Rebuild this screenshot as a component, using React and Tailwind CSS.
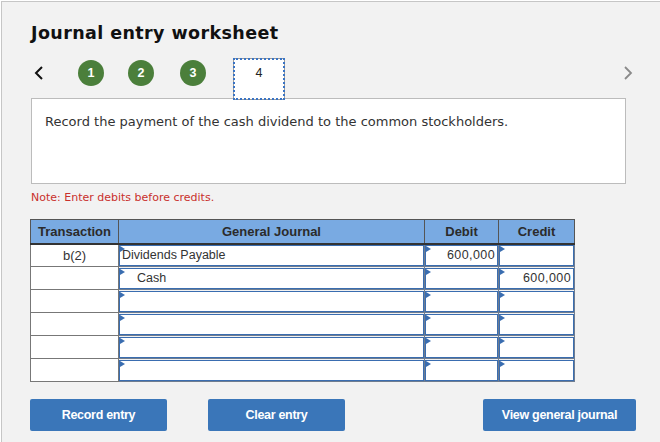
import { useState } from "react";

const rows = [
  { tx: "b(2)", account: "Dividends Payable", indent: false, debit: "600,000", credit: "" },
  { tx: "", account: "Cash", indent: true, debit: "", credit: "600,000" },
  { tx: "", account: "", indent: false, debit: "", credit: "" },
  { tx: "", account: "", indent: false, debit: "", credit: "" },
  { tx: "", account: "", indent: false, debit: "", credit: "" },
  { tx: "", account: "", indent: false, debit: "", credit: "" },
];

const InputCell = ({ value, align = "left", indent = false }) => (
  <td className="p-0 border border-[#6f7d90] h-[23px]">
    <div className="relative h-[21px] border border-[#3a6db0] bg-white flex items-center">
      <span className="absolute top-0 left-0 w-0 h-0 border-y-[3px] border-y-transparent border-l-[5px] border-l-[#3a6db0]" />
      <span
        className={`w-full text-[12.5px] text-[#333] leading-none ${
          align === "right" ? "text-right pr-[2px] tracking-[0.4px]" : indent ? "pl-[17px]" : "pl-[2px]"
        }`}
      >
        {value}
      </span>
    </div>
  </td>
);

const Step = ({ n }) => (
  <div className="mt-[2px] w-[26px] h-[26px] rounded-full bg-[#4b7f3b] flex items-center justify-center text-white text-[12.5px] font-bold font-['Liberation_Sans',sans-serif]">
    {n}
  </div>
);

export default function App() {
  const [step] = useState(4);

  return (
    <div className="w-[660px] h-[442px] bg-white pl-px pt-px overflow-hidden">
      <div className="h-full border-l border-t border-[#c6c6c6] bg-[#f2f2f2] pl-[28px] pr-[33px] font-['DejaVu_Sans',Verdana,sans-serif]">
        <h1 className="pt-[21px] pl-[1px] text-[17.5px] leading-[20px] font-bold text-[#111] tracking-[0.4px]">
          Journal entry worksheet
        </h1>

        <div className="mt-[15px] h-[41px] flex items-start">
          <svg width="11" height="14" viewBox="0 0 11 14" className="mt-[8px] ml-[3px]">
            <polyline points="9,1 3,7 9,13" fill="none" stroke="#111" strokeWidth="2" />
          </svg>
          <div className="flex gap-[24px] ml-[34px]">
            <Step n={1} />
            <Step n={2} />
            <div className="ml-[2px]">
              <Step n={3} />
            </div>
          </div>
          <div className="relative z-10 ml-[27px] w-[52px] h-[42px] bg-white border border-[#9a9a9a] outline-2 outline-dotted outline-[#3a74c4] outline-offset-[-2px] pt-[7px] text-center text-[12.5px] leading-[14px] text-[#222] font-['Liberation_Sans',sans-serif]">
            {step}
          </div>
          <svg width="10" height="14" viewBox="0 0 10 14" className="ml-auto mr-[-6px] mt-[8px]">
            <polyline points="2,1 8,7 2,13" fill="none" stroke="#8a8a8a" strokeWidth="1.8" />
          </svg>
        </div>

        <div className="ml-[1px] mr-[1px] mt-[-1px] h-[86px] bg-white border border-[#bcbcbc] pl-[13px] pt-[15px] text-[13px] leading-[15px] text-[#333]">
          Record the payment of the cash dividend to the common stockholders.
        </div>

        <p className="mt-[7px] pl-[1px] text-[11px] leading-[13px] text-[#c9302c]">Note: Enter debits before credits.</p>

        <table className="mt-[15px] border-collapse table-fixed w-[544px] font-['Liberation_Sans',Arial,sans-serif]">
          <colgroup>
            <col className="w-[88px]" />
            <col className="w-[306px]" />
            <col className="w-[74px]" />
            <col className="w-[76px]" />
          </colgroup>
          <thead>
            <tr className="bg-[#79aae2] h-[24px] text-[13px] font-bold text-[#2b2b2b]">
              <th className="border border-[#555] border-b-2 border-b-[#333] font-bold">Transaction</th>
              <th className="border border-[#555] border-b-2 border-b-[#333] font-bold">General Journal</th>
              <th className="border border-[#555] border-b-2 border-b-[#333] font-bold">Debit</th>
              <th className="border border-[#555] border-b-2 border-b-[#333] font-bold">Credit</th>
            </tr>
          </thead>
          <tbody>
            {rows.map((r, i) => (
              <tr key={i} className="h-[23px]">
                <td className="border border-[#777] bg-white text-center text-[13px] text-[#333] p-0">{r.tx}</td>
                <InputCell value={r.account} indent={r.indent} />
                <InputCell value={r.debit} align="right" />
                <InputCell value={r.credit} align="right" />
              </tr>
            ))}
          </tbody>
        </table>

        <div className="mt-[17px] flex font-['Liberation_Sans',Arial,sans-serif] text-[12.5px] font-bold text-white">
          <button className="w-[137px] h-[32px] bg-[#3a76b9] rounded-[2px] tracking-[-0.3px]">Record entry</button>
          <button className="ml-[41px] w-[137px] h-[32px] bg-[#3a76b9] rounded-[2px] tracking-[-0.3px]">Clear entry</button>
          <button className="ml-auto mr-[-9px] w-[153px] h-[32px] bg-[#3a76b9] rounded-[2px] tracking-[-0.3px]">
            View general journal
          </button>
        </div>
      </div>
    </div>
  );
}
